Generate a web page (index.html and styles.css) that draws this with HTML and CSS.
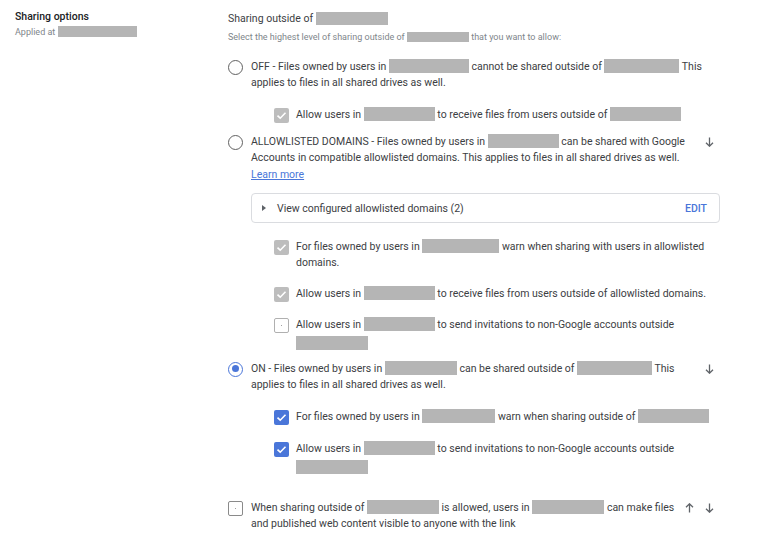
FILE: index.html
```html
<!DOCTYPE html>
<html lang="en">
<head>
<meta charset="utf-8">
<title>Sharing options</title>
<link rel="stylesheet" href="styles.css">
</head>
<body>
<div class="page">
  <div class="side">
    <div class="side-title">Sharing options</div>
    <div class="applied">Applied at <span class="redact r-applied"></span></div>
  </div>

  <div class="main">
    <div class="heading">Sharing outside of <span class="redact r-head"></span></div>
    <div class="hint">Select the highest level of sharing outside of <span class="redact r-hint"></span> that you want to allow:</div>

    <div class="opt opt-first">
      <span class="radio"></span>
      <div class="opt-text">OFF - Files owned by users in <span class="redact w80"></span> cannot be shared outside of <span class="redact w75"></span> This<br>applies to files in all shared drives as well.</div>
    </div>
    <div class="sub">
      <div class="chk-row">
        <span class="chk chk-disabled"><svg viewBox="0 0 15 15"><path d="M3.5 7.6 L6.2 10.2 L11.5 4.8" /></svg></span>
        <div class="chk-text">Allow users in <span class="redact w71"></span> to receive files from users outside of <span class="redact w71"></span></div>
      </div>
    </div>

    <div class="opt">
      <span class="radio"></span>
      <div class="opt-text">ALLOWLISTED DOMAINS - Files owned by users in <span class="redact w71"></span> can be shared with Google<br>Accounts in compatible allowlisted domains. This applies to files in all shared drives as well.<br><a class="link" href="#">Learn more</a></div>
      <div class="arrows">
        <svg class="arrow" viewBox="0 0 9 10"><path d="M4.5 0.5 V9.2 M1 5.8 L4.5 9.2 L8 5.8" /></svg>
      </div>
    </div>
    <div class="expander">
      <span class="tri"></span>
      <span class="exp-label">View configured allowlisted domains (2)</span>
      <span class="edit">EDIT</span>
    </div>
    <div class="sub sub-after-exp">
      <div class="chk-row">
        <span class="chk chk-disabled"><svg viewBox="0 0 15 15"><path d="M3.5 7.6 L6.2 10.2 L11.5 4.8" /></svg></span>
        <div class="chk-text">For files owned by users in <span class="redact w77"></span> warn when sharing with users in allowlisted<br>domains.</div>
      </div>
      <div class="chk-row">
        <span class="chk chk-disabled"><svg viewBox="0 0 15 15"><path d="M3.5 7.6 L6.2 10.2 L11.5 4.8" /></svg></span>
        <div class="chk-text">Allow users in <span class="redact w71"></span> to receive files from users outside of allowlisted domains.</div>
      </div>
      <div class="chk-row">
        <span class="chk chk-empty"></span>
        <div class="chk-text">Allow users in <span class="redact w71"></span> to send invitations to non-Google accounts outside<span class="redact redact-block w72"></span></div>
      </div>
    </div>

    <div class="opt">
      <span class="radio radio-on"></span>
      <div class="opt-text">ON - Files owned by users in <span class="redact w72"></span> can be shared outside of <span class="redact w75"></span> This<br>applies to files in all shared drives as well.</div>
      <div class="arrows">
        <svg class="arrow" viewBox="0 0 9 10"><path d="M4.5 0.5 V9.2 M1 5.8 L4.5 9.2 L8 5.8" /></svg>
      </div>
    </div>
    <div class="sub">
      <div class="chk-row">
        <span class="chk chk-on"><svg viewBox="0 0 15 15"><path d="M3.5 7.6 L6.2 10.2 L11.5 4.8" /></svg></span>
        <div class="chk-text">For files owned by users in <span class="redact w73"></span> warn when sharing outside of <span class="redact w71"></span></div>
      </div>
      <div class="chk-row chk-row-loose">
        <span class="chk chk-on"><svg viewBox="0 0 15 15"><path d="M3.5 7.6 L6.2 10.2 L11.5 4.8" /></svg></span>
        <div class="chk-text">Allow users in <span class="redact w71"></span> to send invitations to non-Google accounts outside<span class="redact redact-block w72"></span></div>
      </div>
    </div>

    <div class="opt opt-last">
      <span class="chk chk-empty chk-dark"></span>
      <div class="opt-text">When sharing outside of <span class="redact w72"></span> is allowed, users in <span class="redact w72"></span> can make files<br>and published web content visible to anyone with the link</div>
      <div class="arrows arrows-two">
        <svg class="arrow" viewBox="0 0 9 10"><path d="M4.5 9.5 V0.8 M1 4.2 L4.5 0.8 L8 4.2" /></svg>
        <svg class="arrow" viewBox="0 0 9 10"><path d="M4.5 0.5 V9.2 M1 5.8 L4.5 9.2 L8 5.8" /></svg>
      </div>
    </div>
  </div>
</div>
</body>
</html>
```

FILE: styles.css
```css
* { box-sizing: border-box; }

body {
  margin: 0;
  background: #ffffff;
  font-family: Roboto, "Liberation Sans", sans-serif;
  color: #3c4043;
}

.page {
  display: grid;
  grid-template-columns: 213px 492px;
  padding: 9px 0 0 15px;
}

.side-title {
  font-size: 10.5px;
  line-height: 16px;
  font-weight: 500;
  color: #202124;
}

.applied {
  margin-top: 1px;
  font-size: 9px;
  line-height: 12px;
  color: #80868b;
}

.redact {
  display: inline-block;
  height: 14px;
  vertical-align: middle;
  background: #b5b5b5;
  margin-top: -2px;
}

.r-applied { width: 79px; height: 11px; }
.r-head { width: 72px; height: 13px; }
.r-hint { width: 62px; height: 10px; }
.w71 { width: 71px; }
.w72 { width: 72px; }
.w73 { width: 73px; }
.w75 { width: 75px; }
.w77 { width: 77px; }
.w80 { width: 80px; }

.redact-block {
  display: block;
  margin-top: 3px;
}

.heading {
  margin-top: 2px;
  font-size: 10.5px;
  line-height: 16px;
  color: #3c4043;
}

.hint {
  margin-top: 4px;
  font-size: 9px;
  line-height: 12px;
  color: #80868b;
}

.opt {
  display: flex;
  align-items: flex-start;
  gap: 8px;
  margin-top: 11px;
}

.opt-first { margin-top: 16px; }
.opt-last { margin-top: 26px; }

.opt-text {
  flex: 1;
  font-size: 10.5px;
  line-height: 16px;
  color: #3c4043;
}

.radio {
  flex: none;
  width: 15px;
  height: 15px;
  margin-top: 0.5px;
  border: 1.5px solid #616161;
  border-radius: 50%;
  position: relative;
}

.radio-on {
  border-color: #4a76d9;
}

.radio-on::after {
  content: "";
  position: absolute;
  left: 2.5px;
  top: 2.5px;
  width: 7px;
  height: 7px;
  border-radius: 50%;
  background: #4a76d9;
}

.arrows {
  flex: none;
  display: flex;
  align-items: center;
  height: 16px;
  padding-right: 6px;
}

.arrows-two {
  gap: 11px;
}

.arrow {
  width: 9px;
  height: 10px;
  fill: none;
  stroke: #5f6368;
  stroke-width: 1.3;
}

.link {
  display: inline-block;
  margin-top: 1px;
  color: #4a76d9;
  text-decoration: underline;
}

.expander {
  display: flex;
  align-items: center;
  height: 30px;
  margin: 10px 0 0 23px;
  padding: 0 12px 0 10px;
  border: 1px solid #dadce0;
  border-radius: 4px;
  font-size: 10.5px;
}

.tri {
  width: 0;
  height: 0;
  border-top: 3.5px solid transparent;
  border-bottom: 3.5px solid transparent;
  border-left: 4px solid #5f6368;
}

.exp-label {
  flex: 1;
  margin-left: 11px;
  color: #3c4043;
}

.edit {
  color: #4a76d9;
  font-weight: 500;
}

.sub {
  margin-left: 46px;
}

.chk-row {
  display: flex;
  align-items: flex-start;
  gap: 7px;
  margin-top: 15px;
}

.opt + .sub > .chk-row:first-child,
.sub-after-exp > .chk-row:first-child,
.chk-row-loose { margin-top: 16px; }

.chk-text {
  flex: 1;
  font-size: 10.5px;
  line-height: 16px;
  color: #3c4043;
}

.chk {
  flex: none;
  width: 15px;
  height: 15px;
  margin-top: 0.5px;
  border-radius: 2px;
  position: relative;
}

.chk svg {
  display: block;
  width: 15px;
  height: 15px;
  fill: none;
  stroke: #ffffff;
  stroke-width: 1.6;
}

.chk-disabled { background: #bdbdbd; }
.chk-on { background: #4a76d9; }

.chk-empty {
  border: 1px solid #b0b0b0;
  background: #ffffff;
}

.chk-dark { border-color: #8a8a8a; }

.chk-empty::after {
  content: "";
  position: absolute;
  left: 6px;
  top: 6px;
  width: 1px;
  height: 1px;
  background: #a0a0a0;
}
```
